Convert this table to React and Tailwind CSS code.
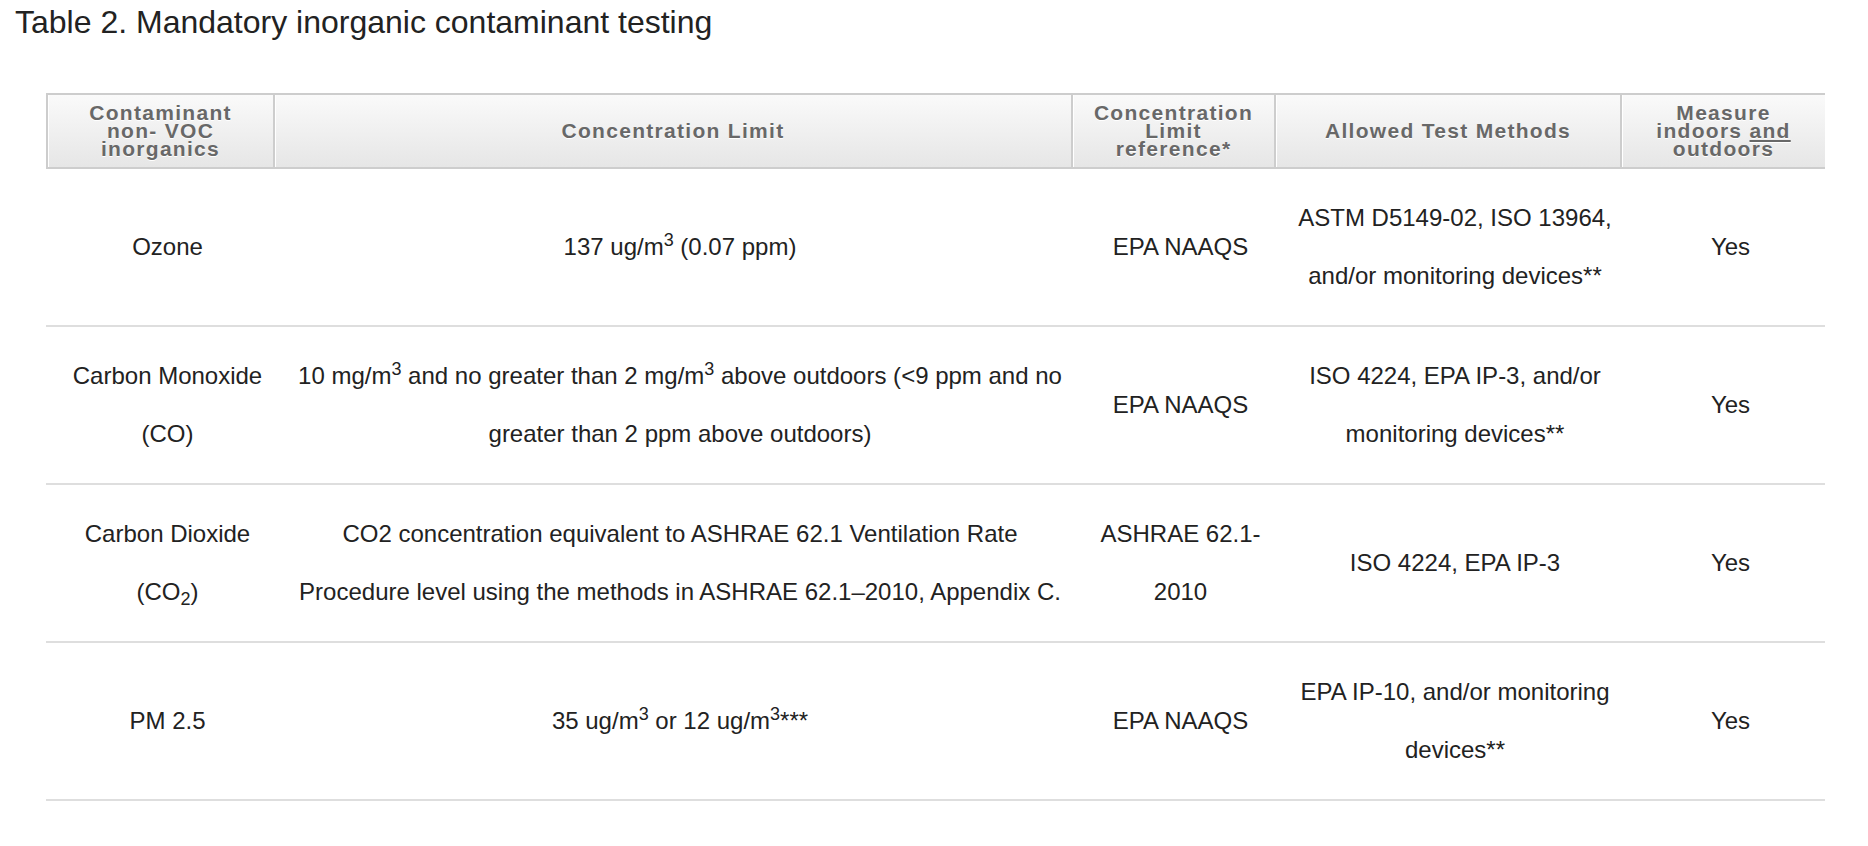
import React from 'react';

const headers = [
  { key: 'contaminant', lines: ['Contaminant', 'non- VOC', 'inorganics'] },
  { key: 'limit', lines: ['Concentration Limit'] },
  { key: 'reference', lines: ['Concentration', 'Limit', 'reference*'] },
  { key: 'methods', lines: ['Allowed Test Methods'] },
  {
    key: 'measure',
    lines: [
      'Measure',
      <>
        indoors <span className="underline">and</span>
      </>,
      'outdoors',
    ],
  },
];

const rows = [
  {
    name: 'Ozone',
    limit: (
      <>
        137 ug/m<sup>3</sup> (0.07 ppm)
      </>
    ),
    reference: 'EPA NAAQS',
    methods: 'ASTM D5149-02, ISO 13964, and/or monitoring devices**',
    measure: 'Yes',
  },
  {
    name: 'Carbon Monoxide (CO)',
    limit: (
      <>
        10 mg/m<sup>3</sup> and no greater than 2 mg/m<sup>3</sup> above outdoors ({'<'}9 ppm and no
        greater than 2 ppm above outdoors)
      </>
    ),
    reference: 'EPA NAAQS',
    methods: 'ISO 4224, EPA IP-3, and/or monitoring devices**',
    measure: 'Yes',
  },
  {
    name: (
      <>
        Carbon Dioxide (CO<sub>2</sub>)
      </>
    ),
    limit:
      'CO2 concentration equivalent to ASHRAE 62.1 Ventilation Rate Procedure level using the methods in ASHRAE 62.1\u20132010, Appendix C.',
    reference: 'ASHRAE 62.1-2010',
    methods: 'ISO 4224, EPA IP-3',
    measure: 'Yes',
  },
  {
    name: 'PM 2.5',
    limit: (
      <>
        35 ug/m<sup>3</sup> or 12 ug/m<sup>3</sup>***
      </>
    ),
    reference: 'EPA NAAQS',
    methods: 'EPA IP-10, and/or monitoring devices**',
    measure: 'Yes',
  },
];

const colWidths = ['w-[227px]', 'w-[798px]', 'w-[203px]', 'w-[346px]', 'w-[205px]'];

function HeaderCell({ lines }) {
  return (
    <th className="border-y-2 border-l-2 border-[#cdcdcd] bg-linear-to-b from-[#fafafa] to-[#e6e6e6] px-[6px] pt-[9px] pb-[9px] text-center align-middle text-[21px] leading-[18px] font-bold tracking-[1.3px] text-[#686868] shadow-[inset_1px_0_0_#ffffff] [text-shadow:0_1px_0_#ffffff]">
      {lines.map((line, i) => (
        <div key={i}>{line}</div>
      ))}
    </th>
  );
}

function BodyCell({ children }) {
  return (
    <td className="border-b-2 border-[#dedede] pt-[20px] pb-[20px] pr-[2px] pl-[18px] text-center align-middle text-[24px] leading-[58px] text-[#222222]">
      {children}
    </td>
  );
}

export default function App() {
  return (
    <div className="min-h-screen bg-white font-['Liberation_Sans',Arial,sans-serif] text-[#222222]">
      <h1 className="pt-[2px] pl-[15px] text-[32px] leading-[40px] font-normal">
        Table 2. Mandatory inorganic contaminant testing
      </h1>
      <div className="mt-[51px] pl-[46px]">
        <table className="w-[1779px] table-fixed border-separate border-spacing-0">
          <colgroup>
            {colWidths.map(w => (
              <col key={w} className={w} />
            ))}
          </colgroup>
          <thead>
            <tr>
              {headers.map(h => (
                <HeaderCell key={h.key} lines={h.lines} />
              ))}
            </tr>
          </thead>
          <tbody>
            {rows.map((row, i) => (
              <tr key={i}>
                <BodyCell>{row.name}</BodyCell>
                <BodyCell>{row.limit}</BodyCell>
                <BodyCell>{row.reference}</BodyCell>
                <BodyCell>{row.methods}</BodyCell>
                <BodyCell>{row.measure}</BodyCell>
              </tr>
            ))}
          </tbody>
        </table>
      </div>
    </div>
  );
}
